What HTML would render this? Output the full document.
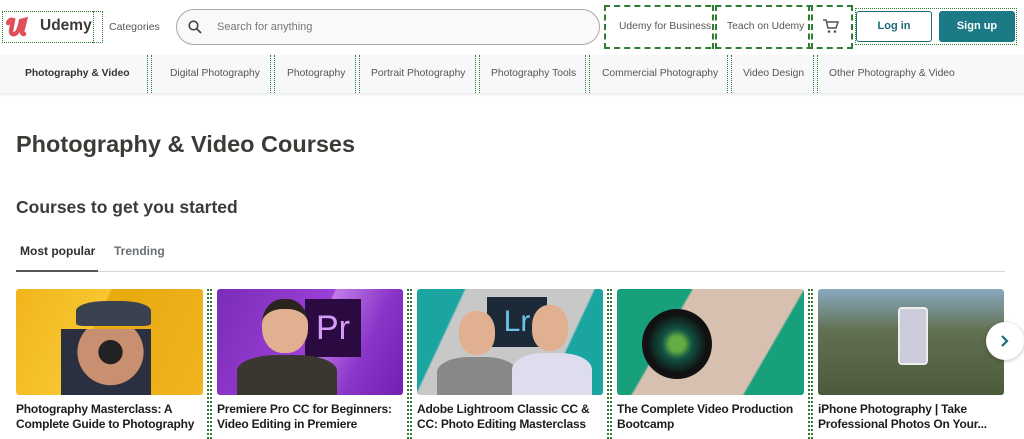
<!DOCTYPE html>
<html><head><meta charset="utf-8"><style>
*{box-sizing:border-box;margin:0;padding:0}
body{width:1024px;height:439px;overflow:hidden;background:#fff;font-family:"Liberation Sans",sans-serif;color:#3c3b37;position:relative}
.a{position:absolute}
.dash{border:1px dashed #2e7d32}
.cat{position:absolute;top:55px;left:0;width:1024px;height:38px;background:#f7f8fa;box-shadow:0 2px 3px rgba(0,0,0,.08);font-size:10.3px;color:#555}
.cat span{position:absolute;top:13px;white-space:nowrap}
.sep{position:absolute;top:0;height:38px;width:5px;border-left:1px dotted #2e7d32;border-right:1px dotted #2e7d32}
.img{position:absolute;top:289px;height:106px;border-radius:3px;overflow:hidden}
.t{position:absolute;top:402px;font-size:12px;font-weight:bold;line-height:15px;color:#1c1d1f;width:200px;letter-spacing:-0.2px;white-space:nowrap}
.vs{position:absolute;top:289px;height:150px;width:5px;border-left:2px dotted #2e7d32;border-right:2px dotted #2e7d32}
</style></head><body>
<div class="a dash" style="left:2px;top:11px;width:101px;height:32px;border-style:dotted"></div>
<div class="a" style="left:93px;top:11px;height:32px;border-left:1px dotted #2e7d32"></div>
<svg class="a" style="left:6px;top:15px" width="32" height="24" viewBox="0 0 32 24"><path d="M2 8 Q4 4 7 5 L5 16 Q5 20 9 19 Q13 17 15 6 L19 5 L16 17 Q16 19 18 19" stroke="#e0505a" stroke-width="4.5" fill="none" stroke-linecap="round"/></svg>
<div class="a" style="left:40px;top:17px;font-size:15.5px;font-weight:bold;color:#3c3b37">Udemy</div>
<div class="a" style="left:109px;top:21px;font-size:10.5px;color:#555">Categories</div>
<div class="a" style="left:176px;top:9px;width:424px;height:36px;border:1px solid #aaa;border-radius:18px;background:#f9f9f9"></div>
<svg class="a" style="left:188px;top:20px" width="14" height="14" viewBox="0 0 14 14"><circle cx="5.5" cy="5.5" r="4.3" stroke="#444" stroke-width="1.6" fill="none"/><path d="M8.7 8.7L13 13" stroke="#444" stroke-width="1.8"/></svg>
<div class="a" style="left:217px;top:21px;font-size:11px;color:#777">Search for anything</div>
<div class="a" style="left:604px;top:5px;width:249px;height:44px;border:2px dashed #2e7d32"></div>
<div class="a" style="left:712px;top:5px;width:5px;height:44px;border-left:2px dashed #2e7d32;border-right:2px dashed #2e7d32"></div>
<div class="a" style="left:808px;top:5px;width:5px;height:44px;border-left:2px dashed #2e7d32;border-right:2px dashed #2e7d32"></div>
<div class="a" style="left:619px;top:21px;font-size:10.3px;color:#555">Udemy for Business</div>
<div class="a" style="left:727px;top:21px;font-size:10.3px;color:#555">Teach on Udemy</div>
<svg class="a" style="left:822px;top:18px" width="17" height="16" viewBox="0 0 17 16"><path d="M1 2h3l2 8h8l2-6H5" stroke="#555" stroke-width="1.5" fill="none"/><circle cx="7" cy="13.5" r="1.3" fill="#555"/><circle cx="13" cy="13.5" r="1.3" fill="#555"/></svg>
<div class="a" style="left:856px;top:11px;width:76px;height:31px;border:1px solid #1c6b78;border-radius:3px;text-align:center;line-height:29px;font-size:11px;font-weight:bold;color:#1c6b78">Log in</div>
<div class="a" style="left:855px;top:8px;width:162px;height:37px;border:1px dotted #2e7d32"></div>
<div class="a" style="left:939px;top:11px;width:76px;height:31px;background:#1c7a87;border-radius:3px;text-align:center;line-height:31px;font-size:11px;font-weight:bold;color:#fff">Sign up</div>
<div class="cat">
<span style="left:25px;font-weight:bold;color:#333">Photography &amp; Video</span>
<div class="sep" style="left:147px"></div>
<span style="left:170px">Digital Photography</span>
<div class="sep" style="left:270px"></div>
<span style="left:287px">Photography</span>
<div class="sep" style="left:355px"></div>
<span style="left:371px">Portrait Photography</span>
<div class="sep" style="left:475px"></div>
<span style="left:491px">Photography Tools</span>
<div class="sep" style="left:585px"></div>
<span style="left:602px">Commercial Photography</span>
<div class="sep" style="left:727px"></div>
<span style="left:743px">Video Design</span>
<div class="sep" style="left:813px"></div>
<span style="left:829px">Other Photography &amp; Video</span>
</div>
<div class="a" style="left:16px;top:131px;font-size:23.5px;font-weight:bold;color:#3c3b37">Photography &amp; Video Courses</div>
<div class="a" style="left:16px;top:197px;font-size:17.5px;font-weight:bold;color:#3c3b37">Courses to get you started</div>
<div class="a" style="left:20px;top:244px;font-size:12px;font-weight:bold;color:#2d2f31">Most popular</div>
<div class="a" style="left:114px;top:244px;font-size:12px;font-weight:bold;color:#6a6f73">Trending</div>
<div class="a" style="left:16px;top:271px;width:989px;height:1px;background:#d1d7dc"></div>
<div class="a" style="left:16px;top:270px;width:82px;height:2px;background:#555"></div>
<div class="img" style="left:16px;width:187px;background:linear-gradient(115deg,#f2b51c 0%,#f7c630 40%,#e8a90f 41%,#f0b420 100%)"><div class="a" style="left:60px;top:12px;width:75px;height:25px;background:#3a4250;border-radius:40% 40% 10% 10%"></div><div class="a" style="left:45px;top:40px;width:90px;height:66px;background:radial-gradient(circle at 55% 35%,#222 0 18%,#c89070 19% 50%,#2a3040 51%)"></div></div>
<div class="img" style="left:217px;width:186px;background:linear-gradient(115deg,#7a2cb8 0%,#9b3fd6 50%,#c07ce8 51%,#8a35c8 75%,#7020b0 100%)"><div class="a" style="left:88px;top:10px;width:56px;height:58px;background:#2a0a40;color:#d49cf8;font-size:34px;text-align:center;line-height:58px">Pr</div><div class="a" style="left:45px;top:10px;width:46px;height:54px;background:#e0b090;border-radius:45%;border-top:10px solid #2a2420"></div><div class="a" style="left:20px;top:66px;width:100px;height:40px;background:#3a3630;border-radius:40% 40% 0 0"></div></div>
<div class="img" style="left:417px;width:186px;background:linear-gradient(115deg,#1aa5a0 0 20%,#c8c8c8 21% 75%,#1aa5a0 76%)"><div class="a" style="left:70px;top:8px;width:60px;height:50px;background:#1c2a38;color:#6fc0e8;font-size:30px;text-align:center;line-height:50px">Lr</div><div class="a" style="left:42px;top:22px;width:36px;height:44px;background:#e0b090;border-radius:45%"></div><div class="a" style="left:20px;top:68px;width:80px;height:38px;background:#888;border-radius:40% 40% 0 0"></div><div class="a" style="left:115px;top:16px;width:36px;height:46px;background:#e0b090;border-radius:45%"></div><div class="a" style="left:95px;top:64px;width:80px;height:42px;background:#dde;border-radius:40% 40% 0 0"></div></div>
<div class="img" style="left:617px;width:187px;background:linear-gradient(120deg,#18a07c 0 30%,#d8c0b0 31% 75%,#18a07c 76%)"><div class="a" style="left:25px;top:20px;width:70px;height:70px;border-radius:50%;background:radial-gradient(circle,#6a4 0 15%,#154 30%,#111 60%)"></div></div>
<div class="img" style="left:818px;width:186px;background:linear-gradient(180deg,#8aa8c0 0%,#607050 40%,#4a5a3a 100%)"><div class="a" style="left:80px;top:18px;width:30px;height:58px;background:#ccd;border:2px solid #eee;border-radius:4px"></div></div>
<div class="vs" style="left:207px"></div><div class="vs" style="left:407px"></div><div class="vs" style="left:607px"></div><div class="vs" style="left:808px"></div>
<div class="t" style="left:16px">Photography Masterclass: A<br>Complete Guide to Photography</div>
<div class="t" style="left:217px">Premiere Pro CC for Beginners:<br>Video Editing in Premiere</div>
<div class="t" style="left:417px">Adobe Lightroom Classic CC &amp;<br>CC: Photo Editing Masterclass</div>
<div class="t" style="left:617px">The Complete Video Production<br>Bootcamp</div>
<div class="t" style="left:818px">iPhone Photography | Take<br>Professional Photos On Your...</div>
<div class="a" style="left:986px;top:322px;width:38px;height:38px;border-radius:50%;background:#fff;box-shadow:0 1px 4px rgba(0,0,0,.25)"></div>
<svg class="a" style="left:1000px;top:334px" width="10" height="14" viewBox="0 0 10 14"><path d="M2 2l5 5-5 5" stroke="#1c6b78" stroke-width="2.2" fill="none"/></svg>
</body></html>
